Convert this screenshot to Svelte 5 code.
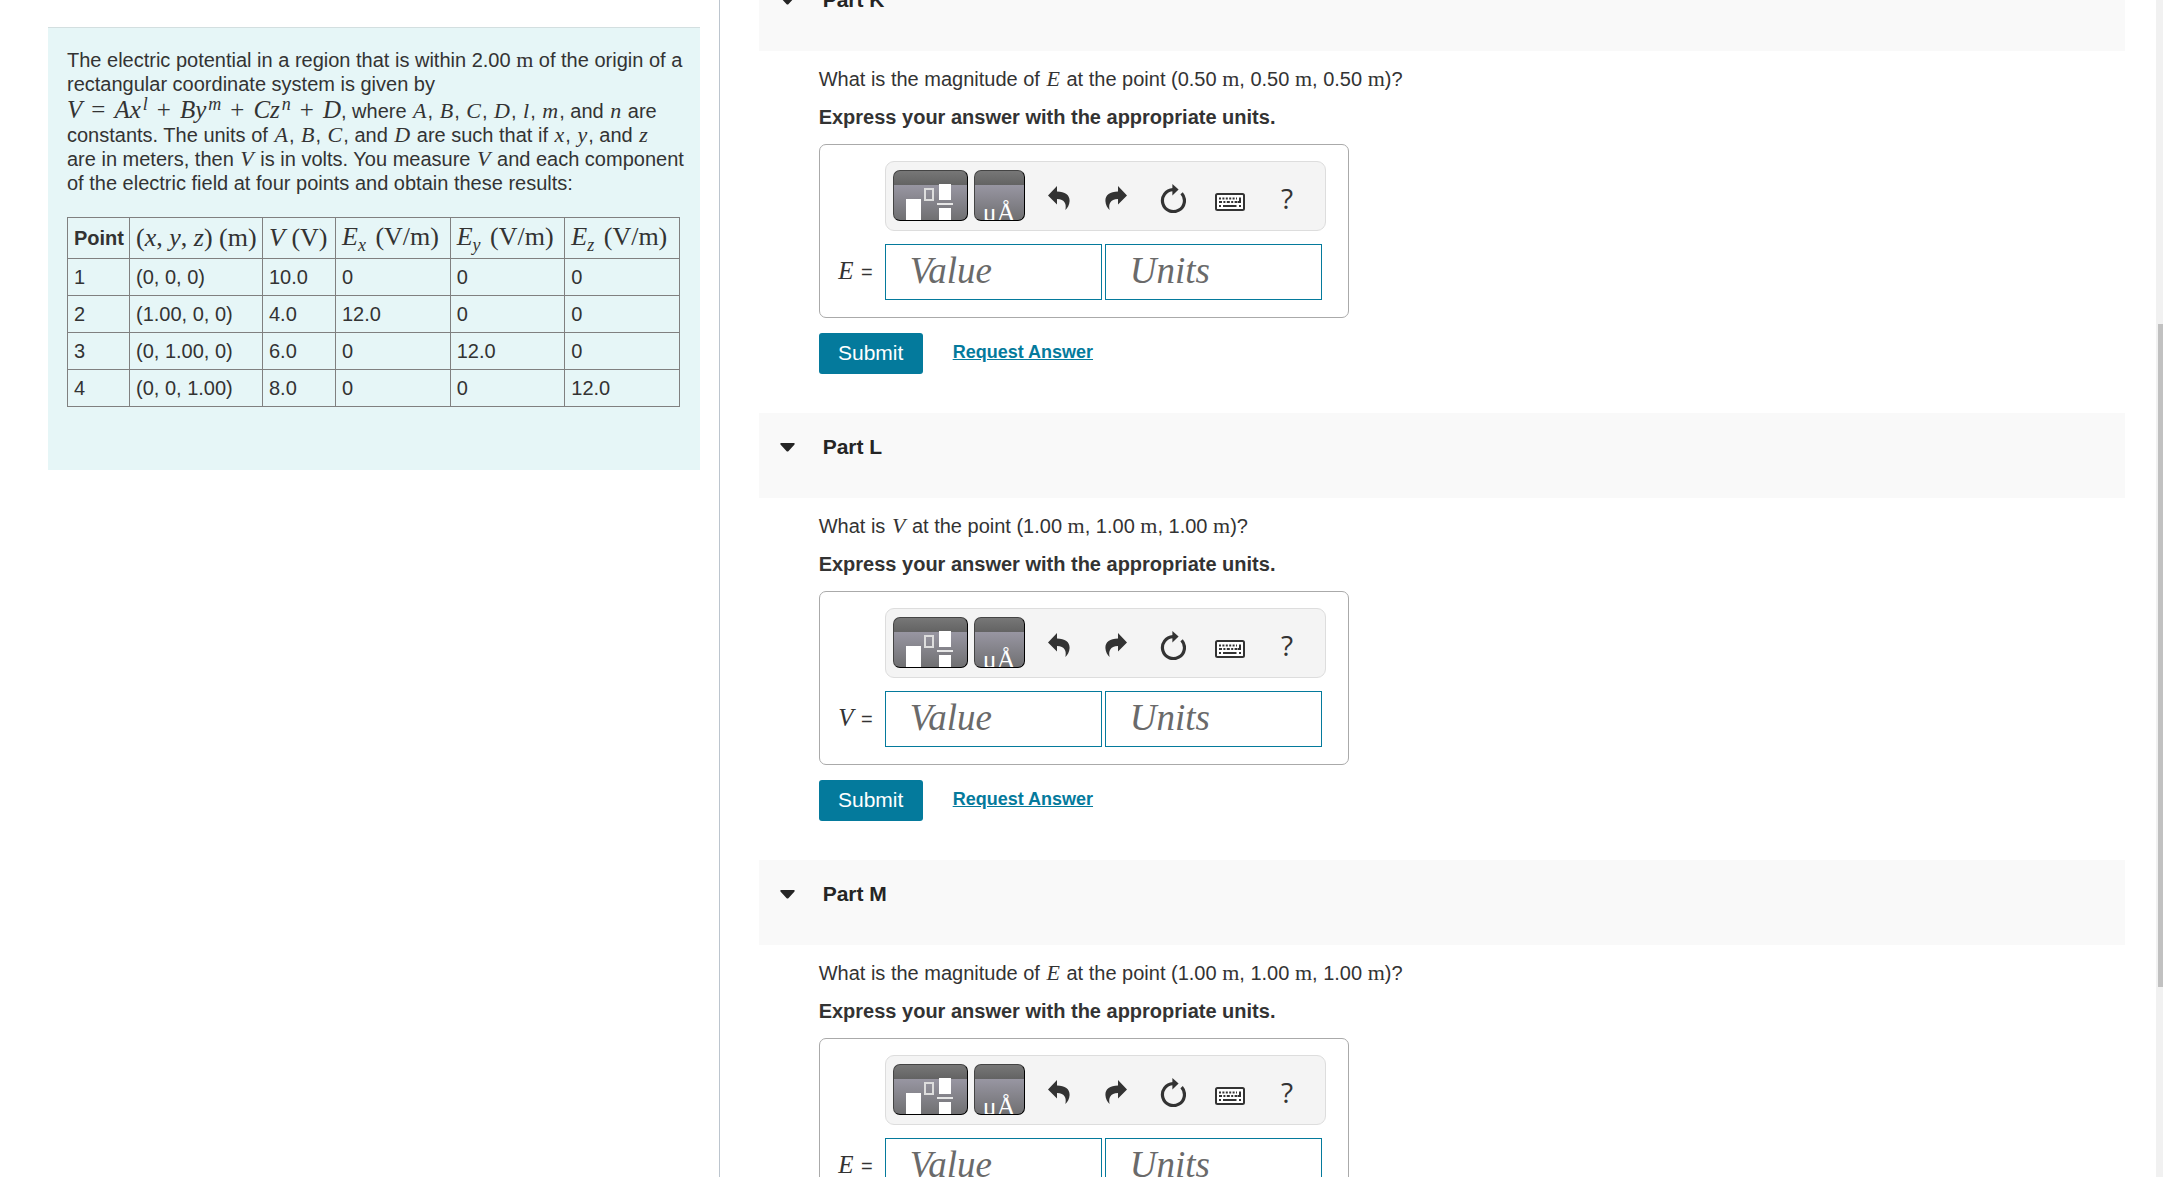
<script lang="ts">
  type Part = {name: string, symbol: string, magnitude: boolean, coord: string}

  const parts: Part[] = [
    {name: 'K', symbol: 'E', magnitude: true, coord: '0.50'},
    {name: 'L', symbol: 'V', magnitude: false, coord: '1.00'},
    {name: 'M', symbol: 'E', magnitude: true, coord: '1.00'},
  ]

  const rows = [
    ['1', '(0, 0, 0)', '10.0', '0', '0', '0'],
    ['2', '(1.00, 0, 0)', '4.0', '12.0', '0', '0'],
    ['3', '(0, 1.00, 0)', '6.0', '0', '12.0', '0'],
    ['4', '(0, 0, 1.00)', '8.0', '0', '0', '12.0'],
  ]

  let open = $state<Record<string, boolean>>({K: true, L: true, M: true})
  let answers = $state<Record<string, {value: string, units: string}>>({
    K: {value: '', units: ''},
    L: {value: '', units: ''},
    M: {value: '', units: ''},
  })

  function reset(name: string) {
    answers[name] = {value: '', units: ''}
  }
</script>

<div class="page">
  <aside class="problem">
    <div class="intro">
      <p>
        The electric potential in a region that is within 2.00 <span class="unit">m</span> of the origin of a
        rectangular coordinate system is given by<br />
        <span class="formula"><i>V</i><b>=</b><i>Ax</i><sup>l</sup><b>+</b><i>By</i><sup>m</sup><b>+</b><i>Cz</i><sup>n</sup><b>+</b><i>D</i></span>, where
        <i>A</i>, <i>B</i>, <i>C</i>, <i>D</i>, <i>l</i>, <i>m</i>, and <i>n</i> are
        constants. The units of <i>A</i>, <i>B</i>, <i>C</i>, and <i>D</i> are such that if <i>x</i>, <i>y</i>, and <i>z</i><br />
        are in meters, then <i>V</i> is in volts. You measure <i>V</i> and each component
        of the electric field at four points and obtain these results:
      </p>
      <table>
        <colgroup>
          <col class="point" /><col class="coords" /><col class="volts" /><col class="field" /><col class="field" /><col class="field" />
        </colgroup>
        <thead>
          <tr>
            <th>Point</th>
            <th class="math">(<i>x</i>, <i>y</i>, <i>z</i>) (m)</th>
            <th class="math"><i>V</i> (V)</th>
            <th class="math"><i>E</i><sub>x</sub> (V/m)</th>
            <th class="math"><i>E</i><sub>y</sub> (V/m)</th>
            <th class="math"><i>E</i><sub>z</sub> (V/m)</th>
          </tr>
        </thead>
        <tbody>
          {#each rows as row}
            <tr>
              {#each row as cell}
                <td>{cell}</td>
              {/each}
            </tr>
          {/each}
        </tbody>
      </table>
    </div>
  </aside>

  <main class="parts">
    {#each parts as part}
      <section class="part">
        <h2>
          <button class="toggle" aria-expanded={open[part.name]} onclick={() => (open[part.name] = !open[part.name])}>
            <svg class="caret" class:closed={!open[part.name]} width="15" height="9" viewBox="0 0 15 9">
              <path d="M1.2 0H13.8Q15.4 .4 14.3 1.8L8.6 8Q7.5 9.2 6.4 8L.7 1.8Q-.4 .4 1.2 0Z" fill="#252525" />
            </svg>
            Part {part.name}
          </button>
        </h2>
        {#if open[part.name]}
          <div class="body">
            <p class="question">
              What is {#if part.magnitude}the magnitude of{/if} <i>{part.symbol}</i> at the point
              ({part.coord} <span class="unit">m</span>, {part.coord} <span class="unit">m</span>, {part.coord} <span class="unit">m</span>)?
            </p>
            <p class="hint">Express your answer with the appropriate units.</p>
            <div class="answer">
              <div class="toolbar">
                <button class="palette templates" aria-label="Templates">
                  <svg width="75" height="51" viewBox="0 0 75 51">
                    <rect x="13" y="29" width="15" height="22" fill="#fff" />
                    <rect x="32" y="19" width="8" height="11" fill="none" stroke="#ddd" stroke-width="2" />
                    <rect x="46" y="14" width="12" height="16" fill="#fff" />
                    <rect x="44" y="33" width="16" height="2" fill="#e6e6e6" />
                    <rect x="46" y="38" width="12" height="13" fill="#fff" />
                  </svg>
                </button>
                <button class="palette symbols" title="Units">μÅ</button>
                <div class="actions">
                  <button aria-label="Undo">
                    <svg width="22" height="24" viewBox="0 0 22 24">
                      <path d="M0 9.5L9 0V5.5C17 5.5 21.8 9 21.6 15C21.4 19 19.6 22 17.4 24C18.6 18 17 13.5 9 13V18.5Z" fill="#333" />
                    </svg>
                  </button>
                  <button aria-label="Redo">
                    <svg width="22" height="24" viewBox="0 0 22 24">
                      <path d="M22 9.5L13 0V5.5C5 5.5 .2 9 .4 15C.6 19 2.4 22 4.6 24C3.4 18 5 13.5 13 13V18.5Z" fill="#333" />
                    </svg>
                  </button>
                  <button aria-label="Reset" onclick={() => reset(part.name)}>
                    <svg width="26" height="29" viewBox="0 0 26 29">
                      <path d="M21.6 9.2A11 11 0 1 1 13 5.6" fill="none" stroke="#333" stroke-width="3.2" />
                      <path d="M12.4 0L18.6 5.6L12.4 11.6Z" fill="#333" />
                    </svg>
                  </button>
                  <button aria-label="Keyboard shortcuts">
                    <svg width="30" height="26" viewBox="0 0 30 26">
                      <rect x="1" y="9" width="28" height="16" rx="1.5" fill="#fff" stroke="#333" stroke-width="2" />
                      <path d="M4 13.5H22" stroke="#333" stroke-width="2" stroke-dasharray="2 1.4" />
                      <path d="M4 17H22" stroke="#333" stroke-width="2" stroke-dasharray="3 1.4 2 1.4" />
                      <path d="M25 12.5V17H22.5" fill="none" stroke="#333" stroke-width="2" />
                      <path d="M4 21H6M8 21H21.5M24 21H26" stroke="#333" stroke-width="2" />
                    </svg>
                  </button>
                  <button class="help" title="Help">?</button>
                </div>
              </div>
              <label for="value-{part.name}"><i>{part.symbol}</i> =</label>
              <div class="fields">
                <input id="value-{part.name}" type="text" placeholder="Value" bind:value={answers[part.name].value} />
                <input type="text" placeholder="Units" aria-label="Units" bind:value={answers[part.name].units} />
              </div>
            </div>
            <div class="submitRow">
              <button class="submit">Submit</button>
              <a href="#request-{part.name}">Request Answer</a>
            </div>
          </div>
        {/if}
      </section>
    {/each}
  </main>

  <div class="scrollbar" aria-hidden="true"><div class="thumb"></div></div>
</div>

<style>
  :global(body) {
    margin: 0;
    background: #fff;
  }
  .page {
    display: grid;
    grid-template-columns: minmax(0, 1fr) minmax(0, 2fr) 7px;
    grid-template-rows: 100vh;
    overflow: hidden;
    font-family: "Liberation Sans", Arial, sans-serif;
    font-size: 20px;
    line-height: 24px;
    color: #333;
  }
  p, h2 {
    margin: 0;
  }
  button {
    font-family: inherit;
    padding: 0;
    border: none;
    cursor: pointer;
  }
  svg {
    display: block;
  }
  i, .unit, .formula b, .math, sup, sub {
    font-family: "Liberation Serif", "Times New Roman", serif;
    font-size: 22px;
    line-height: 22px;
  }
  p > i {
    margin: 0 1px;
  }
  sup, sub {
    font-size: 18px;
    font-style: italic;
    line-height: 16px;
  }
  sup {
    margin-left: 2px;
  }
  sub {
    margin-right: 3px;
    line-height: 8px;
  }

  .problem {
    padding: 27px 19px 0 48px;
  }
  .intro {
    background: #e6f6f7;
    border-top: 1px solid #d3dfe0;
    padding: 20px 4px 63px 19px;
  }
  .formula {
    white-space: nowrap;
  }
  .formula i {
    font-size: 25px;
  }
  .formula b {
    margin: 0 9px;
    font-size: 25px;
    font-weight: normal;
  }
  table {
    width: 100%;
    max-width: 613px;
    margin-top: 22px;
    border-collapse: collapse;
    table-layout: fixed;
  }
  th, td {
    border: 1px solid #808080;
    height: 36px;
    padding: 0 0 0 6px;
    text-align: left;
    white-space: nowrap;
  }
  th {
    height: 40px;
  }
  th.math, .math i {
    font-size: 26px;
    font-weight: normal;
  }
  .point {
    width: 62px;
  }
  .coords {
    width: 133px;
  }
  .volts {
    width: 73px;
  }

  .parts {
    border-left: 1px solid #bcc5ce;
    padding: 0 31px 0 39px;
    overflow: hidden;
  }
  /* the pane is scrolled a little way past the top of the first part */
  .part:first-child {
    margin-top: -34px;
  }
  h2 {
    background: #f9f9f9;
    height: 85px;
  }
  .toggle {
    display: flex;
    align-items: center;
    gap: 28px;
    width: 100%;
    height: 68px;
    padding-left: 21px;
    background: none;
    font-size: 21px;
    font-weight: bold;
    color: #252525;
  }
  .caret.closed {
    transform: rotate(-90deg);
  }
  .body {
    padding: 16px 0 39px 60px;
  }
  .hint {
    margin-top: 14px;
    font-weight: bold;
  }
  .answer {
    display: grid;
    grid-template-columns: 53px 441px;
    column-gap: 12px;
    row-gap: 13px;
    width: fit-content;
    margin-top: 15px;
    padding: 16px 22px 17px 0;
    border: 1px solid #aaa;
    border-radius: 7px;
  }
  .toolbar {
    grid-column: 2;
    display: flex;
    gap: 6px;
    box-sizing: border-box;
    height: 70px;
    padding: 8px 7px;
    background: #f4f4f4;
    border: 1px solid #ddd;
    border-radius: 9px;
  }
  .palette {
    flex: none;
    box-sizing: border-box;
    height: 51px;
    border: 1px solid #000;
    border-top-color: #444;
    border-left-color: #444;
    border-radius: 7px;
    overflow: hidden;
    background: linear-gradient(#777 0, #636363 14px, #9896a2 14px, #707072 100%);
    color: #fff;
  }
  .templates {
    width: 75px;
  }
  .templates svg {
    margin: -1px;
  }
  .symbols {
    width: 51px;
    padding-top: 25px;
    font-family: "Liberation Serif", "Times New Roman", serif;
    font-size: 26px;
    line-height: 34px;
  }
  .actions {
    display: flex;
  }
  .actions button {
    display: flex;
    flex: none;
    align-items: center;
    justify-content: center;
    width: 57px;
    height: 56px;
    background: none;
    color: #333;
  }
  .actions .help {
    font-family: "Open Sans", sans-serif;
    font-size: 28px;
  }
  label {
    align-self: center;
    text-align: right;
    white-space: nowrap;
  }
  label i {
    margin-right: 2px;
    font-size: 25px;
  }
  .fields {
    display: flex;
    gap: 3px;
    padding-right: 4px;
  }
  input {
    flex: 1 1 0;
    min-width: 0;
    box-sizing: border-box;
    height: 56px;
    padding: 0 0 3px 24px;
    border: 1px solid #047a9c;
    border-radius: 0;
    background: #fff;
    font-family: "Liberation Serif", "Times New Roman", serif;
    font-size: 37px;
    color: #333;
  }
  input::placeholder {
    color: #6a6a6a;
    font-style: italic;
    opacity: 1;
  }
  .submitRow {
    display: flex;
    gap: 30px;
    margin-top: 15px;
  }
  .submit {
    width: 104px;
    height: 41px;
    padding-bottom: 2px;
    border-radius: 3px;
    background: #047a9c;
    font-size: 21px;
    color: #fff;
  }
  .submitRow a {
    align-self: center;
    padding-bottom: 3px;
    font-size: 18px;
    font-weight: bold;
    color: #047a9c;
  }

  .scrollbar {
    display: grid;
    grid-template-rows: 324fr 663fr 190fr;
    background: #f1f1f1;
  }
  .thumb {
    grid-row: 2;
    margin-left: 2px;
    background: #c1c1c1;
  }
</style>
